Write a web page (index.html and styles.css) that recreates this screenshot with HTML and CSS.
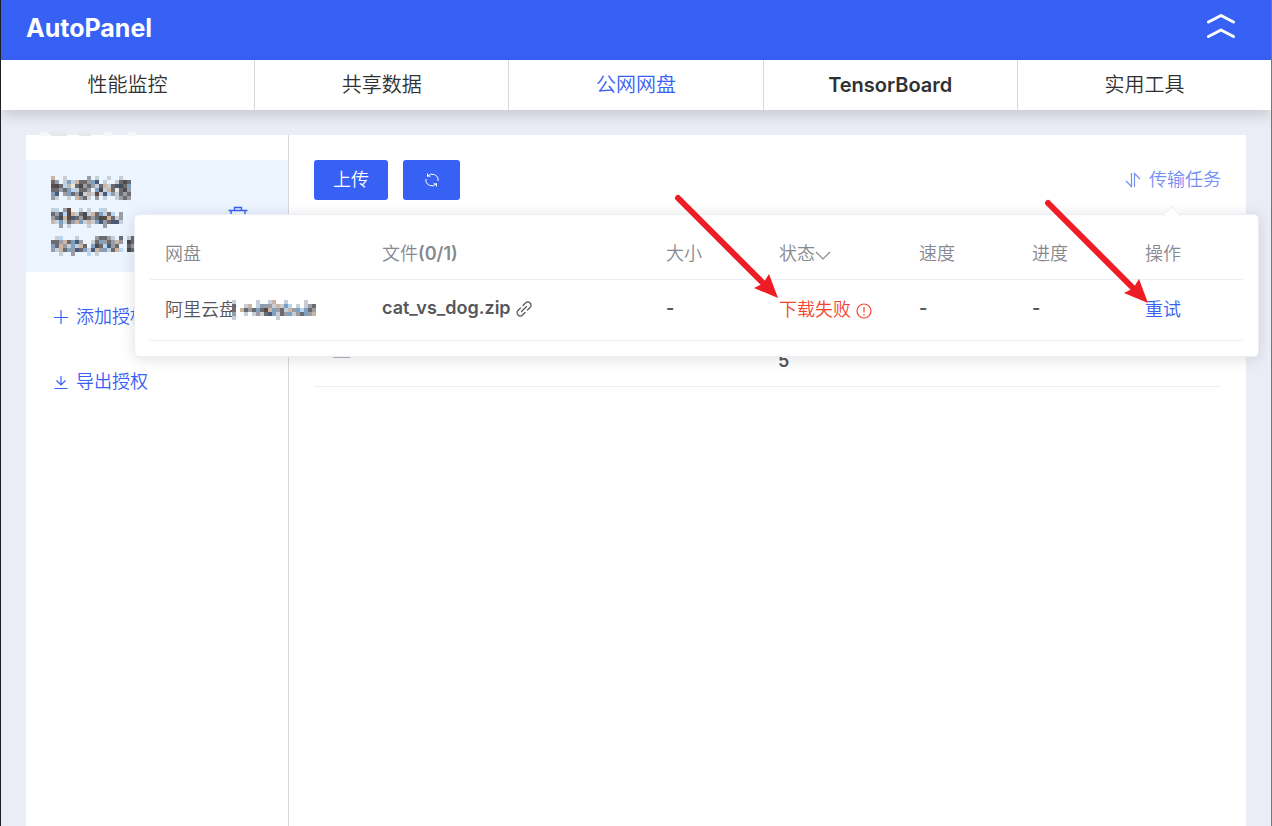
FILE: index.html
```html
<!DOCTYPE html>
<html lang="zh-CN">
<head>
  <meta charset="UTF-8" />
  <meta name="viewport" content="width=device-width, initial-scale=1.0" />
  <title>AutoPanel</title>
  <link rel="stylesheet" href="styles.css">
</head>
<body>
  <header class="header">
    <h1>AutoPanel</h1>
    <button class="collapse" aria-label="收起">
      <svg width="30" height="26" viewBox="0 0 30 26" fill="none" stroke="#fff" stroke-width="3" stroke-linecap="round" stroke-linejoin="round">
        <path d="M2.5 9 15 2.5 27.5 9M2.5 23.5 15 17 27.5 23.5" />
      </svg>
    </button>
  </header>

  <nav class="tabs">
    <a href="#">性能监控</a>
    <a href="#">共享数据</a>
    <a href="#" class="active">公网网盘</a>
    <a href="#"><b>TensorBoard</b></a>
    <a href="#">实用工具</a>
  </nav>

  <div class="container">
    <aside class="sidebar">
      <svg class="mosaic edge" data-mosaic="edge"></svg>
      <div class="account">
        <svg class="mosaic" data-mosaic="account"></svg>
        <button class="icon-btn" aria-label="删除">
          <svg width="20" height="20" viewBox="0 0 20 20" fill="none" stroke="currentColor" stroke-width="1.4">
            <path d="M0.5 4.5H19.5M6.5 4V1.5H13.5V4M3 4.5V18.5H17V4.5M8 8V15M12 8V15" />
          </svg>
        </button>
      </div>
      <button class="side-btn">
        <svg width="16" height="16" viewBox="0 0 16 16" fill="none" stroke="currentColor" stroke-width="1.2">
          <path d="M8 1V15M1 8.5H15" />
        </svg>
        <span>添加授权</span>
      </button>
      <button class="side-btn">
        <svg width="16" height="16" viewBox="0 0 16 16" fill="none" stroke="currentColor" stroke-width="1.2">
          <path d="M8 2V11M3.5 6.5 8 11 12.5 6.5M1.5 14.5H14.5" />
        </svg>
        <span>导出授权</span>
      </button>
    </aside>

    <main class="main">
      <div class="toolbar">
        <button class="btn">上传</button>
        <button class="btn refresh" aria-label="刷新">
          <svg width="16" height="16" viewBox="0 0 16 16" fill="none" stroke="#fff" stroke-width="1">
            <path d="M3.5 4.2H6.5M3.5 1.5V4.2A6 6 0 0 1 14 9M12.5 11.8H9.5M12.5 14.5V11.8A6 6 0 0 1 2 7" />
          </svg>
        </button>
        <a href="#" class="transfer">
          <svg width="16" height="16" viewBox="0 0 16 16" fill="none" stroke="currentColor" stroke-width="1.2">
            <path d="M6.5 1V14.5L1 9M9.5 15V1.5L15 7" />
          </svg>
          <span>传输任务</span>
        </a>
      </div>
      <table class="files">
        <tr>
          <td class="check"><input type="checkbox" aria-label="选择文件"></td>
          <td class="date"><b>5</b></td>
        </tr>
      </table>
    </main>

    <section class="popover">
      <table class="tasks">
        <colgroup>
          <col class="c-disk"><col class="c-file"><col class="c-size"><col class="c-state"><col class="c-speed"><col class="c-speed"><col class="c-speed">
        </colgroup>
        <thead>
          <tr>
            <th>网盘</th>
            <th>文件<b>(0/1)</b></th>
            <th>大小</th>
            <th>状态<svg width="16" height="16" viewBox="0 0 16 16" fill="none" stroke="currentColor" stroke-width="1.2"><path d="M1 5 8 12 15 5" /></svg></th>
            <th>速度</th>
            <th>进度</th>
            <th>操作</th>
          </tr>
        </thead>
        <tbody>
          <tr>
            <td><div class="disk">阿里云盘<svg class="mosaic" data-mosaic="disk"></svg></div></td>
            <td>
              <b>cat_vs_dog.zip</b>
              <svg width="16" height="16" viewBox="0 0 16 16" fill="none" stroke="currentColor" stroke-width="1.2" stroke-linecap="round">
                <path d="M7 4.5 9.5 2A3 3 0 0 1 14 6.5L11.5 9M9 11.5 6.5 14A3 3 0 0 1 2 9.5L4.5 7M5.5 10.5 10.5 5.5" />
              </svg>
            </td>
            <td><b>-</b></td>
            <td class="failed">
              下载失败
              <svg width="16" height="16" viewBox="0 0 16 16" fill="none" stroke="currentColor" stroke-width="1.2">
                <circle cx="8" cy="8" r="7" /><path d="M8 4V9.5M8 11V12.5" />
              </svg>
              <svg class="pointer" width="110" height="110" viewBox="0 0 110 110">
                <path d="M8 8 94 94" /><polygon points="108,108 99,84 94,92 92,94 84,98" />
              </svg>
            </td>
            <td><b>-</b></td>
            <td><b>-</b></td>
            <td class="action">
              <a href="#">重试</a>
              <svg class="pointer" width="110" height="110" viewBox="0 0 110 110">
                <path d="M8 8 94 94" /><polygon points="108,108 99,84 94,92 92,94 84,98" />
              </svg>
            </td>
          </tr>
        </tbody>
      </table>
    </section>
  </div>

  <script src="mosaic.js"></script>
</body>
</html>
```
FILE: styles.css
```css
* {
  box-sizing: border-box;
  margin: 0;
  padding: 0;
}
body {
  display: flex;
  flex-direction: column;
  min-height: 100vh;
  background: #eaedf5;
  border-left: 1px solid #1d1f26;
  border-right: 1px solid #74767c;
  color: #55575b;
  font-family: Inter, "Noto Sans CJK SC", sans-serif;
  font-size: 18px;
  font-weight: 350;
  overflow-x: hidden;
}
b {
  font-weight: 600;
}
a {
  color: #3761f5;
  text-decoration: none;
}
button {
  border: none;
  background: none;
  color: #3761f5;
  font: inherit;
  cursor: pointer;
}

.header {
  height: 60px;
  padding: 0 35px 0 25px;
  background: #3761f5;
  color: #fff;
  display: flex;
  align-items: center;
  justify-content: space-between;
}
.header h1 {
  font-size: 25px;
  font-weight: 700;
  line-height: 56px;
  height: 60px;
}
.collapse svg {
  display: block;
  margin-bottom: 8px;
}

.tabs {
  display: flex;
  height: 50px;
  background: #fff;
  box-shadow: 0 6px 12px rgba(0, 0, 0, 0.14);
}
.tabs a {
  flex: 1;
  border-right: 1px solid #d6d8e0;
  color: #303133;
  font-size: 20px;
  line-height: 50px;
  text-align: center;
}
.tabs a:last-child {
  border-right: none;
}
.tabs .active {
  color: #3761f5;
}

.container {
  position: relative;
  flex: 1;
  display: flex;
  margin: 25px 25px 0;
  background: #fff;
}

.sidebar {
  position: relative;
  width: 263px;
  padding-top: 25px;
  border-right: 1px solid #d6d8e0;
}
.account {
  display: flex;
  align-items: center;
  justify-content: space-between;
  height: 112px;
  padding: 0 40px 0 25px;
  margin-bottom: 12px;
  background: #ecf5ff;
}
.icon-btn {
  height: 20px;
}
.icon-btn svg {
  display: block;
}
.mosaic {
  display: block;
}
.edge {
  position: absolute;
  top: -3px;
  left: 9px;
}
.side-btn {
  display: flex;
  align-items: center;
  gap: 7px;
  height: 65px;
  padding-left: 27px;
}
.side-btn span,
.transfer span {
  padding-bottom: 4px;
}

.main {
  flex: 1;
  padding: 25px;
}
.toolbar {
  display: flex;
  gap: 15px;
  height: 40px;
}
.btn {
  width: 74px;
  padding-bottom: 4px;
  background: #3761f5;
  color: #fff;
  border-radius: 3px;
}
.refresh {
  width: 57px;
  padding-bottom: 0;
}
.refresh svg {
  display: block;
  margin: 0 auto;
}
.transfer {
  display: flex;
  align-items: center;
  gap: 8px;
  margin-left: auto;
  opacity: 0.7;
}

.files {
  width: 100%;
  margin-top: 112px;
  border-collapse: collapse;
}
.files td {
  height: 74px;
  border-bottom: 1px solid #ebeef5;
}
.check {
  width: 464px;
  padding-left: 18px;
}
.check input {
  appearance: none;
  display: block;
  width: 19px;
  height: 18px;
  border: 1px solid #b4b8c2;
  border-radius: 2px;
}
.files .date {
  padding-bottom: 13px;
  line-height: 24px;
  vertical-align: bottom;
}

.popover {
  position: absolute;
  top: 79px;
  left: 108px;
  right: -13px;
  padding: 15px 15px;
  background: #fff;
  border: 1px solid #ebeef5;
  border-radius: 5px;
  box-shadow: 0 2px 15px rgba(0, 0, 0, 0.12);
}
.popover::before {
  content: "";
  position: absolute;
  top: -6px;
  right: 80px;
  width: 12px;
  height: 12px;
  background: #fff;
  border: 1px solid #ebeef5;
  border-right: none;
  border-bottom: none;
  transform: rotate(45deg);
}
.tasks {
  position: relative;
  width: 100%;
  table-layout: fixed;
  border-collapse: collapse;
}
.c-disk { width: 217px; }
.c-file { width: 284px; }
.c-size { width: 113px; }
.c-state { width: 140px; }
.c-speed { width: 113px; }
.tasks th,
.tasks td {
  padding-left: 15px;
  border-bottom: 1px solid #ebeef5;
  text-align: left;
  white-space: nowrap;
}
.tasks th {
  height: 49px;
  padding-bottom: 5px;
  color: #87898f;
  font-weight: 350;
}
.tasks td {
  position: relative;
  height: 61px;
  padding-bottom: 4px;
}
.tasks svg {
  vertical-align: -3px;
}
.disk {
  display: flex;
  align-items: center;
}
.disk .mosaic {
  margin: 5px 0 0 -5px;
}
.tasks .failed {
  color: #f5432d;
}
.pointer {
  position: absolute;
  top: -90px;
  left: -94px;
  pointer-events: none;
}
.action .pointer {
  top: -85px;
  left: -90px;
}
.pointer path {
  stroke: #ee1c25;
  stroke-width: 6;
  stroke-linecap: round;
}
.pointer polygon {
  fill: #ee1c25;
}
```
FILE: mosaic.js
```js
// account names are masked, every letter is one 4px block
const SIZE = 4;

const colors = {
  k: '#4a4b50',
  g: '#6b6b6f',
  m: '#9a9da5',
  l: '#c6ced8',
  b: '#4a5b78',
  s: '#7fa0c0',
  p: '#b8d6ef',
  t: '#cbb6a6',
  n: '#5a4a42',
  w: '#e8e9ea',
  f: '#f5f7fb'
};

const masks = {
  edge: [
    '.ff.wwww...www...ff....ff......'
  ],
  account: [
    't..l.....m.l..l..l...',
    'gm.lsltggmsb.l..lgkg.',
    'nkgptwgkmgmlgtlgbkgs.',
    'ggmgsplggm.skltgwgkm.',
    'sb.msgmkltlnlbpmlgmg.',
    'ml..l.tmgl.m.l..lmgm.',
    '.....................',
    '.....................',
    'lp.mn..l.l..pl.......',
    'gmbpntlgkltgslgp.m...',
    'mgktnbgmngmgkntglm...',
    'tpslgmtsltlsbmgbbl...',
    '..m.l....l...m.......',
    '.....................',
    '.....................',
    '.lp...l....mggml.g.lg',
    'ggmtgsbm..lgsmgmtm.kg',
    'sgtmlsltg.skgpbmg..gm',
    'mltgsmbgslbtmslgtp.kg',
    '..l..m...p.l.........'
  ],
  disk: [
    'l.....l..lt..l....l..',
    'g..lt.lsmmltlsp.l.lmg',
    'g.tgmgsgntsmgltmspsgm',
    'm..l.lmlgbslgmslmgsmt',
    'l..........l.........'
  ]
};

document.querySelectorAll('[data-mosaic]').forEach((svg) => {
  const rows = masks[svg.dataset.mosaic];
  svg.setAttribute('width', rows[0].length * SIZE);
  svg.setAttribute('height', rows.length * SIZE);
  svg.setAttribute('shape-rendering', 'crispEdges');
  rows.forEach((row, y) => {
    [...row].forEach((key, x) => {
      if (key === '.') return;
      const rect = document.createElementNS('http://www.w3.org/2000/svg', 'rect');
      rect.setAttribute('x', x * SIZE);
      rect.setAttribute('y', y * SIZE);
      rect.setAttribute('width', SIZE);
      rect.setAttribute('height', SIZE);
      rect.setAttribute('fill', colors[key]);
      svg.appendChild(rect);
    });
  });
});
```
